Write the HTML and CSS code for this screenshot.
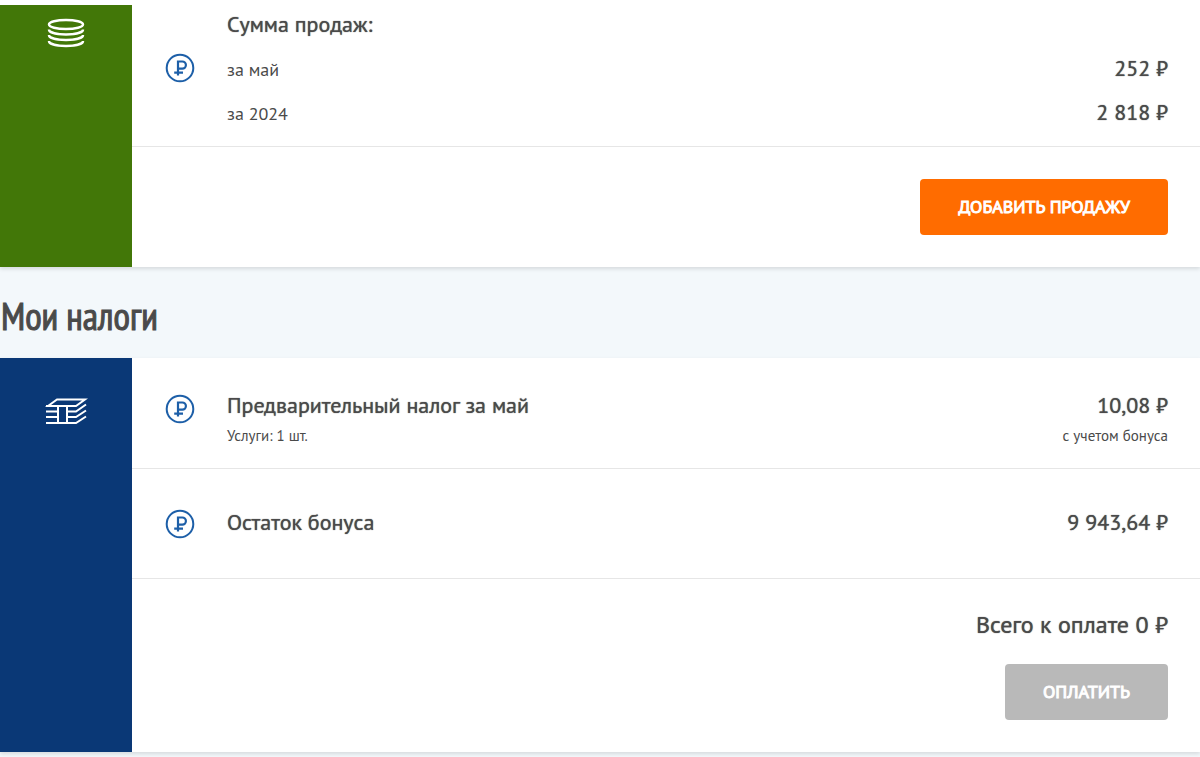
FILE: index.html
```
<!DOCTYPE html>
<html lang="ru">
<head>
  <meta charset="UTF-8" />
  <meta name="viewport" content="width=device-width, initial-scale=1" />
  <title>Мои налоги</title>
  <link rel="stylesheet" href="styles.css">
</head>
<body>
  <svg class="sprite" aria-hidden="true">
    <symbol id="rub" viewBox="0 0 30 30">
      <circle cx="15" cy="15" r="13.300" />
      <path d="M13 22.500V8.500h4.300a3.600 3.600 0 0 1 0 7.200h-4.300M9.200 19.700h8.800" stroke-width="2.200" />
    </symbol>
  </svg>

  <!-- Продажи -->
  <section class="card card-sales">
    <div class="side side-green">
      <svg class="coins" width="38" height="30" viewBox="0 0 38 30">
        <ellipse cx="19" cy="6.500" rx="17" ry="4.500" />
        <path d="M2 11.500c0 6.500 34 6.500 34 0M2 17c0 6.500 34 6.500 34 0M2 23c0 6.500 34 6.500 34 0" />
      </svg>
    </div>
    <div class="content">
      <div class="row row-sales">
        <svg class="rub"><use href="#rub" /></svg>
        <div class="sales">
          <h3 class="title">Сумма продаж:</h3>
          <div class="line"><span class="period">за май</span><span class="amount">252 ₽</span></div>
          <div class="line"><span class="period">за 2024</span><span class="amount">2 818 ₽</span></div>
        </div>
      </div>
      <div class="actions">
        <button class="btn btn-add" type="button">ДОБАВИТЬ ПРОДАЖУ</button>
      </div>
    </div>
  </section>

  <h2 class="heading">Мои налоги</h2>

  <!-- Налоги -->
  <section class="card">
    <div class="side side-blue">
      <svg class="bank" width="44" height="30" viewBox="0 0 44 30">
        <path d="M4 10L13 3.500H41L32 10ZM2 10H32M2 15.500H13M2 21H13M14 10V27M23 10V27M23 15.500H32L42 8.500M23 21H32L42 14.500M2 27H32L42 20.500" />
      </svg>
    </div>
    <div class="content">
      <div class="row row-tax">
        <svg class="rub"><use href="#rub" /></svg>
        <div class="info">
          <h3 class="title">Предварительный налог за май</h3>
          <p class="note">Услуги: 1 шт.</p>
        </div>
        <div class="sum">
          <div class="amount">10,08 ₽</div>
          <p class="note">с учетом бонуса</p>
        </div>
      </div>
      <div class="row row-bonus">
        <svg class="rub"><use href="#rub" /></svg>
        <h3 class="title info">Остаток бонуса</h3>
        <div class="amount">9 943,64 ₽</div>
      </div>
      <div class="actions">
        <div class="total">Всего к оплате 0 ₽</div>
        <button class="btn btn-pay" type="button" disabled>ОПЛАТИТЬ</button>
      </div>
    </div>
  </section>
</body>
</html>
```
FILE: styles.css
```
* { box-sizing: border-box; }

body {
  margin: 0;
  padding-bottom: 5px;
  background: #f3f8fb;
  color: #4a4a4a;
  font-family: "PT Sans", "Noto Sans", sans-serif;
}

h2, h3, p { margin: 0; }

.sprite { position: absolute; width: 0; height: 0; }

.card {
  display: flex;
  background: #fff;
  box-shadow: 0 2px 4px rgba(0, 0, 0, .12);
}

.card-sales { border-top: 5px solid #fff; }

.side {
  width: 132px;
  flex-shrink: 0;
  display: flex;
  justify-content: center;
  align-items: flex-start;
}

.side-green { background: #427708; padding-top: 13px; }
.side-blue { background: #0a3876; padding-top: 38px; }

.side svg { fill: none; stroke: #fff; stroke-width: 2.5; }
.side .bank { stroke-width: 2; }

.content { flex: 1; min-width: 0; }

.row {
  display: flex;
  padding: 0 32px 0 33px;
  border-bottom: 1px solid #e6e6e6;
}

.row-sales { padding-top: 3px; padding-bottom: 12px; }
.row-sales .rub { margin-top: 45px; }
.row-tax { padding-top: 31px; padding-bottom: 17px; }
.row-tax .rub { margin-top: 5px; }
.row-bonus { align-items: center; height: 110px; }
.row-bonus .title, .row-bonus .amount { padding-bottom: 3px; }

.rub {
  width: 30px;
  height: 30px;
  margin-right: 32px;
  flex-shrink: 0;
  fill: none;
  stroke: #1d5fa8;
  stroke-width: 2;
}

.sales, .info { flex: 1; }

.title, .amount {
  font-size: 22px;
  font-weight: 400;
  line-height: 32px;
  text-shadow: 0 0 1px;
}

.amount { text-align: right; }

.line {
  display: flex;
  justify-content: space-between;
  align-items: center;
  height: 44px;
}

.row-sales .title { margin-bottom: 6px; }

.period { padding-top: 2px; font-size: 18px; }

.sum { text-align: right; }

.note { font-size: 15px; line-height: 30px; }

.actions {
  display: flex;
  flex-direction: column;
  align-items: flex-end;
  padding: 32px;
}

.total {
  font-size: 24px;
  line-height: 27px;
  margin-bottom: 26px;
  text-shadow: 0 0 1px;
}

.btn {
  height: 56px;
  padding: 0 38px 2px;
  border: 0;
  border-radius: 4px;
  color: #fff;
  font-family: inherit;
  font-size: 18px;
  -webkit-text-stroke: 1px;
}

.btn-add { background: #ff6c00; cursor: pointer; }
.btn-pay { background: #b9b9b9; }

.heading {
  padding: 29px 0 22px 1px;
  font-family: "PT Sans Narrow", "Roboto Condensed", sans-serif;
  font-size: 38px;
  font-weight: 400;
  line-height: 40px;
  -webkit-text-stroke: 1px;
}
```
